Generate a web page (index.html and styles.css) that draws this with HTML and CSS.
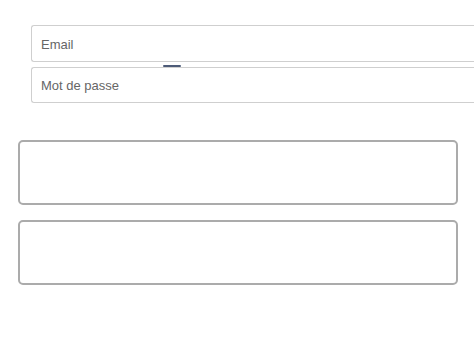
FILE: index.html
```html
<!DOCTYPE html>
<html lang="fr">
<head>
<meta charset="utf-8">
<link rel="stylesheet" href="styles.css">
</head>
<body>
<div class="page">
  <form class="login">
    <input class="field" type="email" placeholder="Email">
    <span class="tab-mark"></span>
    <input class="field" type="password" placeholder="Mot de passe">
  </form>
  <div class="slots">
    <div class="slot"></div>
    <div class="slot"></div>
  </div>
</div>
</body>
</html>
```
FILE: styles.css
```css
html, body {
  margin: 0;
  padding: 0;
  background: #fff;
  overflow: hidden;
}
.page {
  width: 474px;
  height: 337px;
  font-family: "Liberation Sans", Arial, sans-serif;
}
.login {
  position: relative;
  display: flex;
  flex-direction: column;
  gap: 5px;
  padding: 25px 0 0 31px;
  margin: 0;
}
.field {
  box-sizing: border-box;
  width: 443px;
  height: 37px;
  margin: 0;
  padding: 1px 9px 0;
  border: 1px solid #cfcfcf;
  border-right: none;
  border-radius: 3px 0 0 3px;
  font-family: "Liberation Sans", Arial, sans-serif;
  font-size: 13px;
  color: #666;
  background: #fff;
  outline: none;
}
.field + .tab-mark + .field {
  height: 36px;
}
.field::placeholder {
  color: #666;
  opacity: 1;
}
.tab-mark {
  position: absolute;
  left: 163px;
  top: 65px;
  width: 18px;
  height: 2px;
  border-radius: 1px;
  background: #4d5b78;
}
.slots {
  display: flex;
  flex-direction: column;
  gap: 15px;
  padding: 37px 0 0 18px;
}
.slot {
  box-sizing: border-box;
  width: 440px;
  height: 65px;
  border: 2px solid #ababab;
  border-radius: 5px;
  background: #fff;
}
```
